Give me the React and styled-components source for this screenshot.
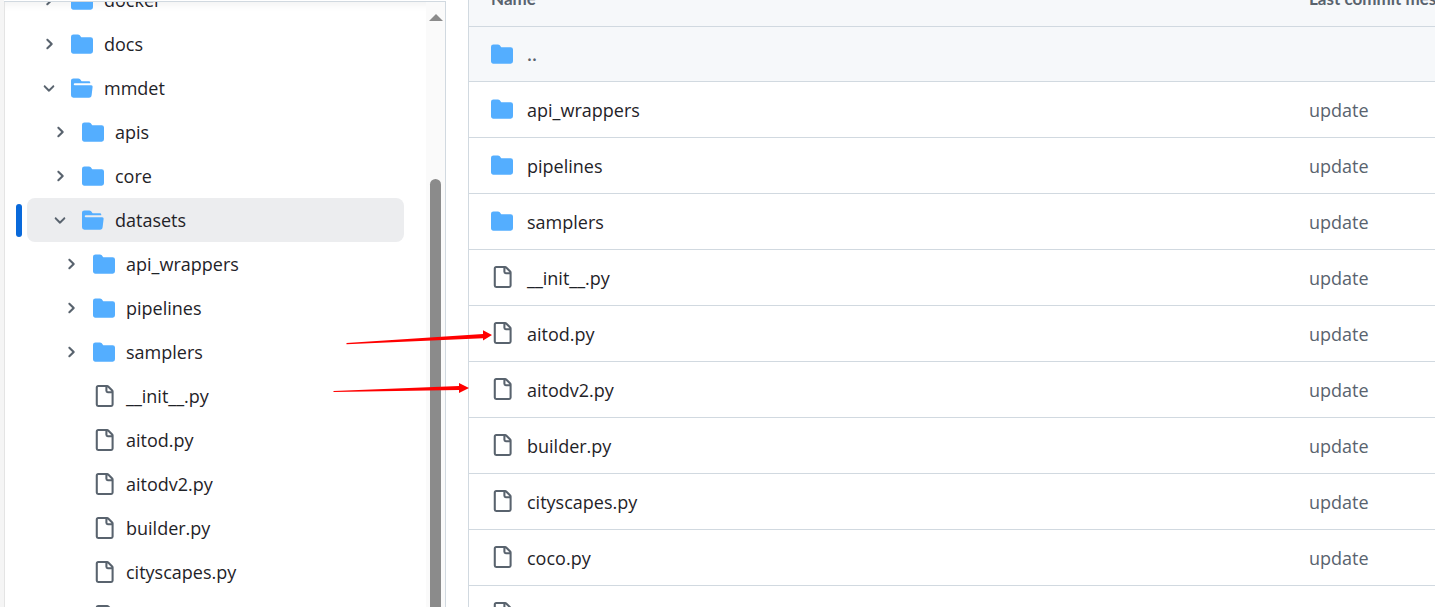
import React from 'react';
import styled, { createGlobalStyle } from 'styled-components';

const tree = [
    { name: 'docker', level: 1, type: 'folder' },
    { name: 'docs', level: 1, type: 'folder' },
    { name: 'mmdet', level: 1, type: 'open' },
    { name: 'apis', level: 2, type: 'folder' },
    { name: 'core', level: 2, type: 'folder' },
    { name: 'datasets', level: 2, type: 'open', current: true },
    { name: 'api_wrappers', level: 3, type: 'folder' },
    { name: 'pipelines', level: 3, type: 'folder' },
    { name: 'samplers', level: 3, type: 'folder' },
    { name: '__init__.py', level: 3, type: 'file' },
    { name: 'aitod.py', level: 3, type: 'file' },
    { name: 'aitodv2.py', level: 3, type: 'file' },
    { name: 'builder.py', level: 3, type: 'file' },
    { name: 'cityscapes.py', level: 3, type: 'file' },
    { name: 'coco.py', level: 3, type: 'file' },
];

const files = [
    { name: 'api_wrappers', type: 'folder' },
    { name: 'pipelines', type: 'folder' },
    { name: 'samplers', type: 'folder' },
    { name: '__init__.py', type: 'file' },
    { name: 'aitod.py', type: 'file' },
    { name: 'aitodv2.py', type: 'file' },
    { name: 'builder.py', type: 'file' },
    { name: 'cityscapes.py', type: 'file' },
    { name: 'coco.py', type: 'file' },
    { name: 'coco_panoptic.py', type: 'file' },
];

const iconPaths = {
    folder: 'M1.75 1A1.75 1.75 0 0 0 0 2.75v10.5C0 14.216.784 15 1.75 15h12.5A1.75 1.75 0 0 0 16 13.25v-8.5A1.75 1.75 0 0 0 14.25 3H7.5a.25.25 0 0 1-.2-.1l-.9-1.2C6.07 1.26 5.55 1 5 1H1.75Z',
    open: 'M.513 1.513A1.75 1.75 0 0 1 1.75 1h3.5c.55 0 1.07.26 1.4.7l.9 1.2a.25.25 0 0 0 .2.1H13a1 1 0 0 1 1 1v.5H2.75a.75.75 0 0 0 0 1.5h11.978a1 1 0 0 1 .994 1.117L15 13.25A1.75 1.75 0 0 1 13.25 15H1.75A1.75 1.75 0 0 1 0 13.25V2.75c0-.464.184-.91.513-1.237Z',
    file: 'M2 1.75C2 .784 2.784 0 3.75 0h6.586c.464 0 .909.184 1.237.513l2.914 2.914c.329.328.513.773.513 1.237v9.586A1.75 1.75 0 0 1 13.25 16h-9.5A1.75 1.75 0 0 1 2 14.25Zm1.75-.25a.25.25 0 0 0-.25.25v12.5c0 .138.112.25.25.25h9.5a.25.25 0 0 0 .25-.25V6h-2.75A1.75 1.75 0 0 1 9 4.25V1.5Zm6.75.062V4.25c0 .138.112.25.25.25h2.688l-.011-.013-2.914-2.914-.013-.011Z',
};

const chevronPaths = {
    folder: 'M4.7 10c-.2 0-.4-.1-.5-.2-.3-.3-.3-.8 0-1.1L6.9 6 4.2 3.3c-.3-.3-.3-.8 0-1.1.3-.3.8-.3 1.1 0l3.3 3.2c.3.3.3.8 0 1.1L5.3 9.7c-.2.2-.4.3-.6.3Z',
    open: 'M6 8.825c-.2 0-.4-.1-.5-.2l-3.3-3.3c-.3-.3-.3-.8 0-1.1.3-.3.8-.3 1.1 0l2.7 2.7 2.7-2.7c.3-.3.8-.3 1.1 0 .3.3.3.8 0 1.1l-3.2 3.2c-.2.2-.4.3-.6.3Z',
};

const EntryIcon = ({ type }) => (
    <Icon viewBox="0 0 16 16" $type={type} aria-hidden="true">
        <path d={iconPaths[type]} />
    </Icon>
);

const FileTree = () => {
    return (
        <Sidebar aria-label="File tree">
            <TreeScroll>
                <TreeList>
                    {tree.map((item) => (
                        <TreeRow key={item.name} $level={item.level} $current={item.current}>
                            {item.type === 'file' ? (
                                <ToggleSpace />
                            ) : (
                                <Toggle aria-label={`Toggle ${item.name}`}>
                                    <svg viewBox="0 0 12 12"><path d={chevronPaths[item.type]} /></svg>
                                </Toggle>
                            )}
                            <TreeLink href={`#${item.name}`}>
                                <EntryIcon type={item.type} />
                                {item.name}
                            </TreeLink>
                        </TreeRow>
                    ))}
                </TreeList>
            </TreeScroll>
            <Scrollbar>
                <ScrollUp />
                <ScrollThumb />
            </Scrollbar>
        </Sidebar>
    );
};

const FileTable = () => {
    return (
        <Content>
            <Table>
                <thead>
                    <tr>
                        <th>Name</th>
                        <CommitHead>Last commit message</CommitHead>
                    </tr>
                </thead>
                <tbody>
                    <ParentRow>
                        <td colSpan={2}>
                            <FileLink href="#parent" $parent>
                                <EntryIcon type="folder" />
                                ..
                            </FileLink>
                        </td>
                    </ParentRow>
                    {files.map((file) => (
                        <tr key={file.name}>
                            <td>
                                <FileLink href={`#${file.name}`}>
                                    <EntryIcon type={file.type} />
                                    {file.name}
                                </FileLink>
                            </td>
                            <CommitCell><a href="#commit">update</a></CommitCell>
                        </tr>
                    ))}
                </tbody>
            </Table>
        </Content>
    );
};

const App = () => {
    return (
        <Page>
            <GlobalStyle />
            <FileTree />
            <FileTable />
            {/* hand-drawn arrows over the listing */}
            <Arrows viewBox="0 0 160 70" aria-hidden="true">
                <path d="M13.5 13.1 150 4V.3L159 5 150 10.4V8.2L13.5 14.2Z" />
                <path d="M.5 61 126 56V53L136 58 126 63V60L.5 62Z" />
            </Arrows>
        </Page>
    );
};

const GlobalStyle = createGlobalStyle`
* {
    box-sizing: border-box;
}
body {
    margin: 0;
    overflow: hidden;
    color: #1f2328;
    background: white;
    font-family: "Open Sans", "Noto Sans", sans-serif;
    font-size: 18px;
    line-height: 28px;
}
a {
    color: inherit;
    text-decoration: none;
}
`;

const Page = styled.div`
    position: relative;
    display: flex;
    gap: 22px;
    height: 100vh;
    overflow: hidden;
    border-left: 4px solid #f5f5f5;
`;

const Sidebar = styled.nav`
    display: flex;
    flex: 0 0 442px;
    margin-top: 1px;
    border: solid #d1d9e0;
    border-width: 1px 1px 0 0;
    box-shadow: inset 1px 0 #e4e4e4, inset 0 10px 10px -8px #f0f0f0;
`;

const TreeScroll = styled.div`
    flex: 1;
    overflow: hidden;
    padding: 0 22px 0 23px;
`;

const TreeList = styled.ul`
    list-style: none;
    margin: -24px 0 0;
    padding: 0;
`;

const TreeRow = styled.li`
    position: relative;
    display: flex;
    align-items: center;
    gap: 14px;
    height: 44px;
    padding-left: ${({ $level }) => 3 + $level * 11}px;
    border-radius: 8px;
    background: ${({ $current }) => ($current ? '#ecedef' : 'transparent')};
    &::before {
        content: '';
        display: ${({ $current }) => ($current ? 'block' : 'none')};
        position: absolute;
        left: -11px;
        top: 6px;
        width: 6px;
        height: 33px;
        border-radius: 6px;
        background: #0969da;
    }
`;

const ToggleSpace = styled.span`
    width: 16px;
`;

const Toggle = styled.button`
    display: flex;
    width: 16px;
    height: 16px;
    padding: 0;
    border: 0;
    background: none;
    svg {
        width: 16px;
        height: 16px;
        fill: #59636e;
    }
`;

const TreeLink = styled.a`
    display: flex;
    align-items: center;
    gap: 11px;
`;

const Icon = styled.svg`
    flex: none;
    width: 22px;
    height: 22px;
    fill: ${({ $type }) => ($type === 'file' ? '#59636e' : '#54aeff')};
`;

const Scrollbar = styled.div`
    display: flex;
    flex-direction: column;
    align-items: center;
    gap: 158px;
    width: 19px;
    padding-top: 12px;
    background: #fafafa;
`;

const ScrollUp = styled.div`
    border: solid transparent;
    border-width: 0 7px 7px;
    border-bottom-color: #8b8b8b;
`;

const ScrollThumb = styled.div`
    flex: 1;
    width: 11px;
    border-radius: 6px 6px 0 0;
    background: #8b8b8b;
`;

const Content = styled.main`
    flex: 1;
    min-width: 0;
    border-left: 1px solid #d1d9e0;
    overflow: hidden;
`;

const Table = styled.table`
    width: 100%;
    margin-top: -29px;
    table-layout: fixed;
    border-spacing: 0;
    th, td {
        height: 56px;
        padding: 0 0 0 22px;
        border-bottom: 1px solid #d1d9e0;
        text-align: left;
    }
    th {
        color: #59636e;
        background: #f6f8fa;
        font-family: Lato, "Open Sans", sans-serif;
        font-size: 17px;
        font-weight: 700;
        white-space: nowrap;
    }
`;

const CommitHead = styled.th`
    && {
        width: 126px;
        padding-left: 0;
        overflow: hidden;
    }
`;

const CommitCell = styled.td`
    && {
        padding-left: 0;
        color: #59636e;
    }
`;

const ParentRow = styled.tr`
    background: #f6f8fa;
    && td {
        height: 55px;
    }
`;

const FileLink = styled.a`
    display: flex;
    align-items: center;
    gap: 14px;
    color: ${({ $parent }) => ($parent ? '#59636e' : '#1f2328')};
    font-weight: ${({ $parent }) => ($parent ? 600 : 400)};
    letter-spacing: normal;
    ${Icon} {
        margin-bottom: ${({ $parent }) => ($parent ? 0 : 1)}px;
    }
`;

const Arrows = styled.svg`
    position: absolute;
    left: 329px;
    top: 330px;
    width: 160px;
    height: 70px;
    fill: #ff0000;
    pointer-events: none;
`;

export default App;
